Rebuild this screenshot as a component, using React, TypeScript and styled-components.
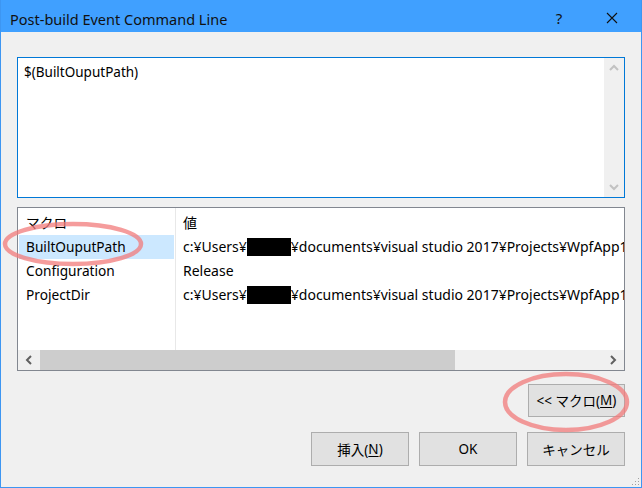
import React from "react";
import styled, { createGlobalStyle } from "styled-components";

const Global = createGlobalStyle`
  html, body { margin: 0; padding: 0; background: #f0f0f0; }
  body { font-family: "Noto Sans", "Noto Sans CJK JP", sans-serif; }
`;

const FONT = `"Noto Sans", "Noto Sans CJK JP", sans-serif`;

const Window = styled.div`
  position: relative;
  width: 642px;
  height: 488px;
  box-sizing: border-box;
  border: 1px solid #3d96f2;
  border-top: none;
  background: #f0f0f0;
  display: flex;
  flex-direction: column;
  font-family: ${FONT};
  color: #000;
  overflow: hidden;
`;

const TitleBar = styled.div`
  height: 32px;
  flex: none;
  margin: 0 -1px;
  background: #40a0ff;
  display: flex;
  align-items: center;
  padding-left: 10px;
  font-size: 14.5px;
`;

const Title = styled.div`
  flex: 1;
  margin-top: 5px;
  color: #111;
`;

const TitleButton = styled.div<{ $w: number }>`
  width: ${(p) => p.$w}px;
  height: 32px;
  display: flex;
  align-items: center;
  justify-content: center;
  padding-top: 4px;
  box-sizing: border-box;
  font-size: 15px;
  color: #111;
`;

const Body = styled.div`
  flex: 1;
  display: flex;
  flex-direction: column;
  padding: 25px 16px 21px 16px;
`;

const EditBox = styled.div`
  height: 141px;
  box-sizing: border-box;
  border: 1px solid #0078d7;
  background: #fff;
  display: flex;
`;

const EditText = styled.div`
  flex: 1;
  padding: 5px 6px;
  font-size: 13.5px;
`;

const VScroll = styled.div`
  width: 20px;
  background: #f0f0f0;
  display: flex;
  flex-direction: column;
  justify-content: space-between;
  align-items: center;
  padding: 4px 0;
`;

const ListBox = styled.div`
  margin-top: 9px;
  height: 164px;
  box-sizing: border-box;
  border: 1px solid #828790;
  background: #fff;
  display: flex;
  flex-direction: column;
`;

const ListRows = styled.div`
  flex: 1;
  display: grid;
  grid-template-columns: 157px 1fr;
  grid-auto-rows: 24px;
  align-content: start;
  overflow: hidden;
  padding-top: 3px;
  position: relative;
`;

const Divider = styled.div`
  position: absolute;
  left: 157px;
  top: 0;
  bottom: 0;
  width: 1px;
  background: #e8e8e8;
`;

const Cell = styled.div<{ $sel?: boolean; $right?: boolean }>`
  display: block;
  line-height: 24px;
  padding-left: 7px;
  margin-left: 1px;
  margin-right: ${(p) => (p.$right ? 0 : 1)}px;
  font-size: ${(p) => (p.$right ? 14 : 13.7)}px;
  white-space: nowrap;
  overflow: hidden;
  background: ${(p) => (p.$sel ? "#cce8ff" : "transparent")};
`;

const Redact = styled.span`
  display: inline-block;
  width: 44px;
  height: 18px;
  vertical-align: -4px;
  background: #000;
`;

const HScroll = styled.div`
  height: 20px;
  flex: none;
  background: #f0f0f0;
  display: flex;
  align-items: stretch;
`;

const ScrollBtn = styled.div`
  width: 22px;
  display: flex;
  align-items: center;
  justify-content: center;
`;

const Track = styled.div`
  flex: 1;
  display: flex;
  align-items: stretch;
`;

const Thumb = styled.div`
  width: 415px;
  background: #cdcdcd;
`;

const Row = styled.div<{ $top: number }>`
  margin-top: ${(p) => p.$top}px;
  display: flex;
  justify-content: flex-end;
  gap: 10px;
`;

const Button = styled.div<{ $w: number; $h: number }>`
  width: ${(p) => p.$w}px;
  height: ${(p) => p.$h}px;
  box-sizing: border-box;
  border: 1px solid #adadad;
  background: #e1e1e1;
  display: flex;
  align-items: center;
  justify-content: center;
  font-size: 13.5px;
  padding-bottom: 1px;
`;

const U = styled.span`
  text-decoration: underline;
  text-underline-offset: 2px;
`;

const Overlay = styled.svg`
  position: absolute;
  left: 0;
  top: 0;
  pointer-events: none;
`;

const Grip = styled.svg`
  position: absolute;
  right: 1px;
  bottom: 1px;
`;

const Arrow = ({ d, c }: { d: string; c: string }) => (
  <svg width="12" height="12" viewBox="0 0 12 12">
    <path d={d} fill="none" stroke={c} strokeWidth="2" />
  </svg>
);

const PATH_TAIL = "¥documents¥visual studio 2017¥Projects¥WpfApp1¥WpfApp1¥";

export default function App() {
  return (
    <>
      <Global />
      <Window>
        <TitleBar>
          <Title>Post-build Event Command Line</Title>
          <TitleButton $w={46}>?</TitleButton>
          <TitleButton $w={60}>
            <svg width="12" height="12" viewBox="0 0 12 12">
              <path d="M1 1L11 11M11 1L1 11" stroke="#111" strokeWidth="1.1" />
            </svg>
          </TitleButton>
        </TitleBar>
        <Body>
          <EditBox>
            <EditText>$(BuiltOuputPath)</EditText>
            <VScroll>
              <Arrow d="M2 8L6 4L10 8" c="#c2c2c2" />
              <Arrow d="M2 4L6 8L10 4" c="#c2c2c2" />
            </VScroll>
          </EditBox>
          <ListBox>
            <ListRows>
              <Divider />
              <Cell>マクロ</Cell>
              <Cell $right>値</Cell>
              <Cell $sel>BuiltOuputPath</Cell>
              <Cell $right>
                c:¥Users¥<Redact />
                {PATH_TAIL}
              </Cell>
              <Cell>Configuration</Cell>
              <Cell $right>Release</Cell>
              <Cell>ProjectDir</Cell>
              <Cell $right>
                c:¥Users¥<Redact />
                {PATH_TAIL}
              </Cell>
            </ListRows>
            <HScroll>
              <ScrollBtn>
                <Arrow d="M8 2L4 6L8 10" c="#606060" />
              </ScrollBtn>
              <Track>
                <Thumb />
              </Track>
              <ScrollBtn>
                <Arrow d="M4 2L8 6L4 10" c="#606060" />
              </ScrollBtn>
            </HScroll>
          </ListBox>
          <Row $top={13}>
            <Button $w={97} $h={33}>
              &lt;&lt; マクロ(<U>M</U>)
            </Button>
          </Row>
          <Row $top={15}>
            <Button $w={98} $h={34}>
              挿入(<U>N</U>)
            </Button>
            <Button $w={98} $h={34}>OK</Button>
            <Button $w={98} $h={34}>キャンセル</Button>
          </Row>
        </Body>
        <Grip width="10" height="10" viewBox="0 0 10 10">
          {[
            [8, 2],
            [8, 5],
            [5, 5],
            [8, 8],
            [5, 8],
            [2, 8],
          ].map(([x, y], i) => (
            <rect key={i} x={x} y={y} width="1" height="1" fill="#a0a0a0" />
          ))}
        </Grip>
        <Overlay width="642" height="488" viewBox="0 0 642 488">
          <ellipse cx="72" cy="244" rx="68" ry="20" fill="none" stroke="#f27b7b" strokeOpacity="0.75" strokeWidth="4.5" />
          <ellipse cx="565" cy="402" rx="61" ry="28" fill="none" stroke="#f27b7b" strokeOpacity="0.75" strokeWidth="4.5" />
        </Overlay>
      </Window>
    </>
  );
}
